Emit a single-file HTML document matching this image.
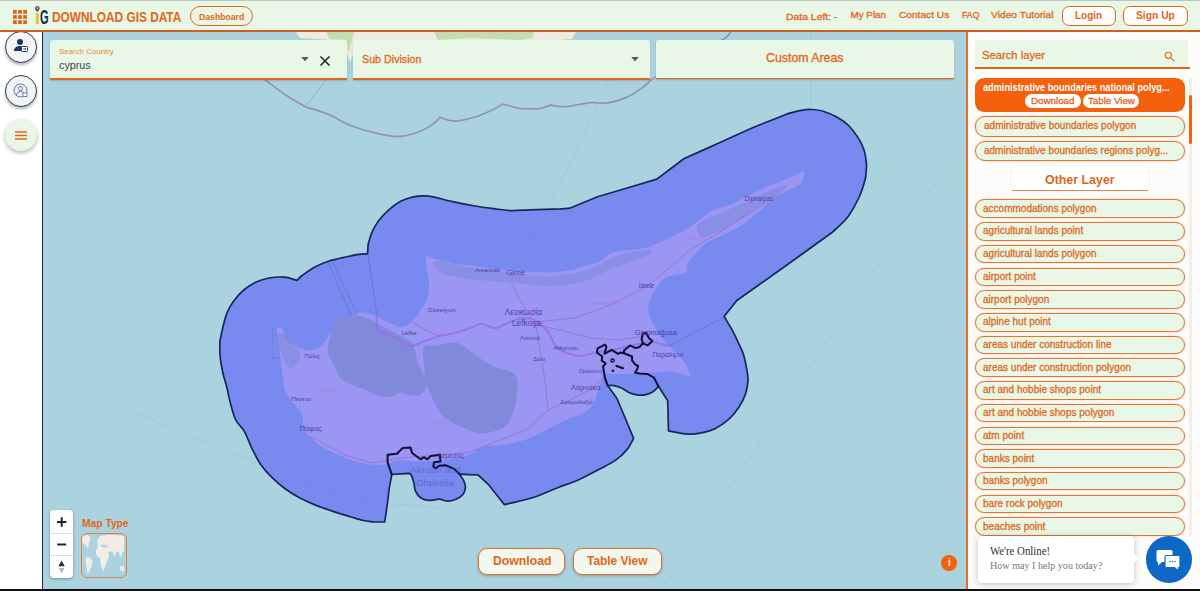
<!DOCTYPE html>
<html lang="en">
<head>
<meta charset="utf-8">
<title>Download GIS Data - Cyprus</title>
<style>
*{box-sizing:border-box;margin:0;padding:0}
html,body{width:1200px;height:591px;overflow:hidden;background:#fff;font-family:"Liberation Sans",sans-serif}
.abs{position:absolute}
.t{position:absolute;white-space:nowrap;transform-origin:0 50%;z-index:20}
.m{-webkit-text-stroke:.3px currentColor}
#hdr{position:absolute;left:0;top:0;width:1200px;height:32px;background:#e9f7e6;border-top:1px solid #bcc6bc;border-bottom:2px solid #cf5f1c;z-index:5}
#side{position:absolute;left:0;top:32px;width:43px;height:559px;background:#fff;border-right:1px solid #1f2a44;z-index:4}
#map{position:absolute;left:43px;top:32px;width:923px;height:559px;background:#aad3df;overflow:hidden}
#panel{position:absolute;left:965.500px;top:32px;width:234.500px;height:559px;background:#fdfcfb;border-left:2px solid #e0702c;z-index:4}
#bottomline{position:absolute;left:0;top:589px;width:1200px;height:2px;background:#111;z-index:30}
.pill{position:absolute;border:1px solid #e2661a}
.box{position:absolute;background:#e9f7e6;border-bottom:2px solid #e2661a;box-shadow:0 1px 2px rgba(0,0,0,.18);border-radius:3px 3px 0 0;z-index:6}
.li{position:absolute;left:975.400px;width:209.400px;height:18.500px;border:1px solid #e2762f;border-radius:10px;background:#e9f7e6;box-shadow:0 0 2px rgba(226,102,26,.45);z-index:6}
.circ{position:absolute;left:4.500px;width:32px;height:32px;border-radius:50%;background:#f3f4f6;border:1px solid #3a3f4a;box-shadow:0 2px 3px rgba(0,0,0,.3)}
.btn{position:absolute;border:1.700px solid #e2702a;border-radius:9px;background:#f3f8ee;box-shadow:0 1px 3px rgba(0,0,0,.25);z-index:6}
</style>
</head>
<body>
<div id="hdr"></div>
<svg class="abs" style="left:13px;top:9.500px;z-index:7" width="14" height="14" viewBox="0 0 14 14"><g fill="#e2661a"><rect x="0" y="0" width="3.800" height="3.800"/><rect x="5.100" y="0" width="3.800" height="3.800"/><rect x="10.200" y="0" width="3.800" height="3.800"/><rect x="0" y="5.100" width="3.800" height="3.800"/><rect x="5.100" y="5.100" width="3.800" height="3.800"/><rect x="10.200" y="5.100" width="3.800" height="3.800"/><rect x="0" y="10.200" width="3.800" height="3.800"/><rect x="5.100" y="10.200" width="3.800" height="3.800"/><rect x="10.200" y="10.200" width="3.800" height="3.800"/></g></svg>
<span class="t" style="left:34.600px;top:6.0px;font-size:21px;line-height:21px;color:#e6c62c;font-weight:bold">ı</span>
<svg class="abs" style="left:35.200px;top:5.900px;z-index:21" width="4.600" height="6" viewBox="0 0 46 60"><path d="M23 0C10 0 0 10 0 22c0 14 23 38 23 38s23-24 23-38C46 10 36 0 23 0z" fill="#46555a"/><circle cx="23" cy="21" r="8" fill="#e9f7e6"/></svg>
<span class="t" style="left:40.300px;top:6.5px;font-size:20.500px;line-height:20.500px;color:#0d2f52;font-weight:bold;transform:scaleX(.54)">G</span>
<div class="pill" style="left:190px;top:5.500px;width:63px;height:20px;border-radius:10px;z-index:7"></div>
<div class="pill" style="left:1062.300px;top:5.500px;width:53.500px;height:20px;border-radius:7px;background:#fff;z-index:7"></div>
<div class="pill" style="left:1123.200px;top:5.500px;width:64.600px;height:20px;border-radius:7px;background:#fff;z-index:7"></div>
<div id="side">
  <div class="circ" style="top:-1px"></div>
  <svg class="abs" style="left:12.500px;top:6px" width="16" height="16" viewBox="0 0 16 16"><circle cx="7" cy="4" r="3" fill="#1d3566"/><path d="M1 13c0-3.500 2.500-5 6-5 1 0 2 .2 2.800.5V13z" fill="#1d3566"/><rect x="8.500" y="8.500" width="6" height="5" rx=".8" fill="#fff" stroke="#1d3566" stroke-width="1"/><path d="M10 11h3M12 10l1 1-1 1" stroke="#1d3566" stroke-width=".8" fill="none"/></svg>
  <div class="circ" style="top:42.500px"></div>
  <svg class="abs" style="left:12.500px;top:50.500px" width="16" height="16" viewBox="0 0 16 16"><circle cx="7.500" cy="7.500" r="6.500" fill="none" stroke="#4a6a9c" stroke-width=".9"/><circle cx="7.500" cy="5.500" r="2" fill="none" stroke="#4a6a9c" stroke-width=".9"/><path d="M3.500 12c.5-2.500 2-3.500 4-3.500s3.500 1 4 3.500" fill="none" stroke="#4a6a9c" stroke-width=".9"/><rect x="10" y="10" width="4" height="3.500" fill="#fff" stroke="#4a6a9c" stroke-width=".8"/></svg>
  <div class="abs" style="left:4.500px;top:87px;width:32px;height:32px;border-radius:50%;background:#e9f7e6;box-shadow:0 2px 4px rgba(0,0,0,.3)"></div>
  <svg class="abs" style="left:14.500px;top:98.500px" width="12" height="9" viewBox="0 0 12 9"><path d="M0 1h12M0 4.500h12M0 8h12" stroke="#e2661a" stroke-width="1.300"/></svg>
</div>
<div id="map">
<svg class="abs" style="left:0;top:0" width="923" height="559" viewBox="43 32 923 559">
<rect x="43" y="32" width="923" height="559" fill="#aad3df"/>
<path d="M296 32 L300 38 L330 40 L340 42 L346 52 L350 62 L355 50 L362 41 L380 40 L430 41 L470 40 L520 41 L560 40 L572 39 L576 32 Z" fill="#f0ebe0"/>
<path d="M326 32 L330 39 L346 40 L349 52 L352 40 L354 32 Z M434 32 L438 40 L470 38 L520 40 L532 38 L534 32 Z" fill="#c4dcb4"/>
<path d="M264.9 79.8 C271.9 84.9 279.3 90.7 286.0 95.2 C292.7 99.7 298.8 102.9 305.2 106.7 C312.9 109.2 320.5 111.1 328.2 114.3 C335.9 117.5 343.5 122.7 351.2 125.8 C358.9 128.9 366.5 130.9 374.2 132.7 C381.9 134.5 390.2 136.6 397.2 136.6 C404.2 136.6 410.6 134.6 416.3 132.7 C422.1 130.8 427.7 127.6 431.7 125.1 C435.7 122.5 437.3 120.0 440.1 117.4 C445.0 118.7 448.4 121.4 454.7 121.2 C461.0 121.0 471.3 118.1 477.7 116.2 C484.1 114.3 488.9 111.7 493.0 109.7 C497.1 107.7 499.4 105.9 502.6 104.0 C508.3 105.5 514.1 107.1 519.8 108.6 C526.2 108.6 533.9 109.2 539.0 108.6 C544.1 108.0 546.7 106.3 550.5 105.1 C555.6 105.6 559.4 107.1 565.8 106.7 C572.2 106.3 581.8 103.5 588.8 102.8 C595.8 102.1 601.6 103.8 608.0 102.8 C614.4 101.8 621.5 99.6 627.2 97.1 C633.0 94.5 638.0 90.7 642.5 87.5 C647.0 84.3 647.8 82.2 654.0 77.9 C660.2 73.7 671.5 67.0 680.0 62.0 C688.5 57.0 697.7 51.8 705.0 48.0 C712.3 44.2 719.7 41.7 724.0 39.0 C728.3 36.3 728.7 34.3 731.0 32.0" fill="none" stroke="#9391ba" stroke-width="1.7" stroke-linejoin="round"/>
<path d="M305.2 106.7 L326 80" fill="none" stroke="#9c98c4" stroke-width=".7"/>
<path d="M608 80 L577 150 L521 259" fill="none" stroke="#8fb0cf" stroke-width=".8" stroke-dasharray="2 2" opacity=".7"/>
<path d="M950 161 L855 300 L775 420 L665 585" fill="none" stroke="#8fb0cf" stroke-width=".8" stroke-dasharray="2 2" opacity=".7"/>
<path d="M133 412 L253 462 L330 490 L392 504 L444 508" fill="none" stroke="#8fb0cf" stroke-width=".8" stroke-dasharray="2 2" opacity=".7"/>
<path d="M811 32 L811 110 L806 171" fill="none" stroke="#8fb0cf" stroke-width=".8" stroke-dasharray="2 2" opacity=".7"/>
<path d="M425.9 255.4 C429.6 256.8 432.2 258.2 436.9 259.6 C441.5 261.0 448.1 262.8 453.8 263.8 C459.5 264.8 465.2 264.8 470.8 265.5 C476.4 266.2 482.1 267.4 487.7 268.1 C493.3 268.8 499.0 269.2 504.6 269.8 C510.2 270.4 515.9 271.1 521.5 271.5 C527.1 271.9 532.8 272.2 538.4 272.3 C544.0 272.4 549.8 272.7 555.4 272.3 C561.0 271.9 566.7 271.1 572.3 269.8 C577.9 268.5 584.6 266.1 589.2 264.7 C593.8 263.3 596.0 263.2 600.0 261.2 C604.0 259.1 605.9 254.6 613.2 252.4 C620.5 250.2 635.2 250.2 644.0 248.0 C652.8 245.8 658.7 242.5 666.0 239.2 C673.3 235.9 681.4 232.2 688.0 228.2 C694.6 224.2 701.2 218.1 705.6 215.0 C710.0 211.9 710.0 211.3 714.4 209.5 C718.8 207.7 726.1 206.4 732.0 204.0 C737.9 201.6 743.7 198.1 749.6 195.2 C755.5 192.3 761.0 189.2 767.2 186.4 C773.4 183.7 781.0 181.3 787.0 178.7 C793.0 176.1 798.0 173.6 803.5 171.0 C803.9 171.7 804.2 172.5 804.6 173.2 C803.1 176.9 803.1 181.3 800.2 184.2 C797.3 187.1 791.8 188.2 787.0 190.8 C782.2 193.4 775.6 196.7 771.6 199.6 C767.6 202.5 765.7 205.8 762.8 208.4 C759.9 211.0 757.7 212.1 754.0 215.0 C750.3 217.9 745.9 222.7 740.8 226.0 C735.7 229.3 729.1 231.9 723.2 234.8 C717.3 237.7 710.4 240.3 705.6 243.6 C700.8 246.9 697.5 251.3 694.6 254.6 C691.7 257.9 689.5 260.5 688.0 263.4 C686.5 266.3 688.4 270.2 685.8 272.2 C683.2 274.2 676.3 274.4 672.6 275.5 C668.9 276.6 666.7 276.4 663.8 278.8 C660.9 281.2 657.5 285.8 655.0 290.0 C652.5 294.2 649.8 299.6 648.8 303.8 C647.8 308.0 648.3 311.7 649.0 315.0 C649.7 318.3 651.0 319.8 653.0 323.5 C655.0 327.2 658.4 333.3 661.1 337.0 C663.8 340.7 666.3 342.9 669.2 345.9 C672.1 348.8 676.0 351.7 678.7 354.7 C681.4 357.7 683.7 361.0 685.5 364.1 C687.3 367.2 688.6 371.5 689.5 373.6 C690.4 375.8 690.4 375.9 690.9 377.0 C687.7 376.1 684.8 375.2 681.4 374.3 C678.0 373.4 674.7 372.0 670.6 371.6 C666.5 371.2 660.6 372.0 657.0 372.2 C653.4 372.4 652.0 372.7 648.9 372.9 C645.8 373.1 642.8 373.4 638.1 373.6 C633.4 373.8 626.1 373.9 620.6 374.0 C615.1 374.1 608.1 373.5 605.0 374.5 C601.9 375.5 602.9 377.4 601.8 380.0 C600.7 382.6 600.0 385.7 598.4 390.0 C596.8 394.3 594.8 402.0 592.0 406.0 C589.2 410.0 586.1 411.4 581.5 413.8 C576.9 416.2 570.2 418.1 564.6 420.6 C559.0 423.1 553.3 426.2 547.7 429.0 C542.1 431.8 536.4 435.2 530.8 437.5 C525.1 439.8 519.4 441.7 513.8 443.0 C508.2 444.3 502.4 444.8 497.0 445.5 C491.6 446.2 486.0 445.5 481.5 447.0 C477.0 448.5 475.6 452.4 470.0 454.5 C464.4 456.6 454.2 458.4 447.7 459.5 C441.1 460.6 436.3 460.9 430.7 461.2 C425.1 461.5 419.4 461.3 413.8 461.2 C408.2 461.1 401.4 459.9 396.9 460.5 C392.4 461.1 391.0 463.9 386.8 464.6 C382.6 465.3 376.9 465.2 371.5 464.6 C366.1 464.0 360.2 462.9 354.6 461.2 C349.0 459.5 343.3 457.0 337.7 454.5 C332.1 452.0 325.6 449.1 320.8 446.0 C316.0 442.9 311.7 438.9 308.9 435.8 C306.1 432.7 304.9 431.1 303.8 427.4 C302.7 423.7 304.1 418.0 302.1 413.8 C300.1 409.6 294.8 405.9 292.0 402.0 C289.2 398.1 286.7 394.6 285.2 390.2 C283.7 385.8 283.5 380.1 282.8 375.7 C282.1 371.3 281.6 368.6 281.0 363.8 C280.4 359.0 279.9 351.2 279.4 347.0 C278.8 342.8 278.2 341.7 277.7 338.5 C277.2 335.3 276.9 331.5 276.5 328.0 C278.3 327.9 280.2 327.9 282.0 327.8 C283.1 331.2 284.1 335.5 285.4 338.0 C286.6 340.5 287.1 341.2 289.5 343.0 C291.9 344.8 296.0 347.4 299.7 348.6 C303.4 349.8 307.8 350.9 311.5 350.3 C315.2 349.7 318.9 347.6 321.7 345.2 C324.5 342.8 326.3 339.0 328.4 336.0 C330.4 333.0 331.9 329.8 334.0 327.0 C336.1 324.2 338.3 321.1 341.2 319.4 C344.1 317.7 348.0 317.9 351.4 316.8 C354.8 315.7 357.3 312.6 361.5 312.6 C365.7 312.6 372.3 315.1 376.8 316.8 C381.3 318.5 384.4 321.1 388.6 322.8 C392.8 324.5 398.2 327.3 402.1 327.0 C406.1 326.7 408.9 324.2 412.3 321.0 C415.7 317.8 419.9 311.4 422.4 307.5 C424.9 303.6 426.4 301.3 427.5 297.4 C428.6 293.4 429.3 288.9 429.2 283.8 C429.1 278.7 427.2 271.7 426.7 267.0 C426.1 262.3 426.2 259.3 425.9 255.4 Z" fill="#f2efe9"/>
<path d="M339.0 319.3 C342.7 317.9 351.5 315.7 357.3 316.2 C363.1 316.7 369.2 320.3 373.6 322.3 C378.0 324.3 379.3 326.0 383.7 328.4 C388.1 330.8 395.3 333.8 400.0 336.5 C404.7 339.2 409.4 340.6 412.1 344.7 C414.8 348.8 414.7 356.3 416.2 360.9 C417.7 365.4 419.4 368.3 421.0 372.0 C422.6 375.7 426.2 379.3 426.0 383.0 C425.8 386.7 423.0 392.2 420.0 394.0 C417.0 395.8 411.3 394.4 408.0 394.0 C404.7 393.6 402.7 391.2 400.0 391.4 C397.3 391.6 395.2 394.7 391.8 395.4 C388.4 396.1 383.7 396.4 379.6 395.4 C375.6 394.4 371.6 391.0 367.5 389.3 C363.4 387.6 359.7 387.3 355.3 385.3 C350.9 383.3 344.4 380.6 341.0 377.2 C337.6 373.8 337.0 369.1 335.0 365.0 C333.0 360.9 329.6 357.6 328.9 352.8 C328.2 348.1 330.0 341.2 331.0 336.5 C332.0 331.8 333.7 327.3 335.0 324.4 C336.3 321.5 335.3 320.7 339.0 319.3 Z" fill="#bcd4b4" stroke="#bcd4b4" stroke-width="2" stroke-linejoin="round" opacity="1"/>
<path d="M424.3 348.7 C426.0 343.6 431.1 347.5 436.5 346.7 C441.9 345.9 450.2 342.1 457.0 344.0 C463.8 345.9 471.3 353.8 477.5 357.8 C483.7 361.8 488.8 365.5 494.4 368.0 C500.0 370.5 507.6 370.8 511.3 373.0 C515.0 375.2 515.8 376.7 516.4 381.5 C517.0 386.3 516.1 395.1 514.7 401.8 C513.3 408.6 510.8 417.5 508.0 422.0 C505.2 426.5 502.3 427.3 497.8 429.0 C493.3 430.7 487.1 432.9 480.9 432.3 C474.7 431.7 466.8 428.3 460.6 425.5 C454.4 422.7 448.2 419.9 443.7 415.4 C439.2 410.9 436.1 403.5 433.5 398.4 C430.9 393.3 429.2 388.6 428.0 385.0 C426.8 381.4 426.9 383.1 426.3 377.0 C425.7 370.9 422.6 353.8 424.3 348.7 Z" fill="#bcd4b4" stroke="#bcd4b4" stroke-width="2" stroke-linejoin="round" opacity="1"/>
<path d="M277.5 336.0 C278.2 334.5 281.2 333.8 283.0 335.0 C284.8 336.2 286.0 340.7 288.0 343.0 C290.0 345.3 293.0 347.0 295.0 349.0 C297.0 351.0 299.7 352.8 300.0 355.0 C300.3 357.2 298.5 359.8 297.0 362.0 C295.5 364.2 292.8 368.0 291.0 368.0 C289.2 368.0 287.5 364.7 286.0 362.0 C284.5 359.3 283.2 355.0 282.0 352.0 C280.8 349.0 279.8 346.7 279.0 344.0 C278.2 341.3 276.8 337.5 277.5 336.0 Z" fill="#bcd4b4" stroke="#bcd4b4" stroke-width="2" stroke-linejoin="round" opacity="0.6"/>
<path d="M437.0 262.0 C441.0 261.8 451.2 265.5 460.0 267.0 C468.8 268.5 480.0 269.7 490.0 271.0 C500.0 272.3 509.2 274.0 520.0 275.0 C530.8 276.0 543.3 277.8 555.0 277.0 C566.7 276.2 579.2 273.5 590.0 270.0 C600.8 266.5 610.0 259.2 620.0 256.0 C630.0 252.8 646.7 250.7 650.0 251.0 C653.3 251.3 646.7 255.2 640.0 258.0 C633.3 260.8 619.2 264.3 610.0 268.0 C600.8 271.7 595.0 277.2 585.0 280.0 C575.0 282.8 561.7 284.7 550.0 285.0 C538.3 285.3 526.7 283.0 515.0 282.0 C503.3 281.0 490.8 280.2 480.0 279.0 C469.2 277.8 457.3 276.8 450.0 275.0 C442.7 273.2 438.2 270.2 436.0 268.0 C433.8 265.8 433.0 262.2 437.0 262.0 Z" fill="#bcd4b4" stroke="#bcd4b4" stroke-width="2" stroke-linejoin="round" opacity="0.6"/>
<path d="M700.0 224.0 C704.7 219.7 720.0 214.7 730.0 210.0 C740.0 205.3 750.8 200.0 760.0 196.0 C769.2 192.0 783.3 185.3 785.0 186.0 C786.7 186.7 776.7 195.0 770.0 200.0 C763.3 205.0 753.3 211.0 745.0 216.0 C736.7 221.0 727.2 226.7 720.0 230.0 C712.8 233.3 705.3 237.0 702.0 236.0 C698.7 235.0 695.3 228.3 700.0 224.0 Z" fill="#bcd4b4" stroke="#bcd4b4" stroke-width="2" stroke-linejoin="round" opacity="0.6"/>
<path d="M308.9 435.8 L325.0 444.0 L345.0 455.0 L372.0 463.0 L400.0 458.0 L440.0 455.0 L470.0 452.0 L500.0 440.0 L530.0 428.0 L548.0 410.0 L545.0 380.0 L540.0 350.0 L536.0 325.0" fill="none" stroke="#f0a8a0" stroke-width="1" stroke-linejoin="round"/>
<path d="M536.0 325.0 L560.0 330.0 L590.0 338.0 L620.0 340.0 L650.0 335.0" fill="none" stroke="#f0a8a0" stroke-width="1" stroke-linejoin="round"/>
<path d="M536.0 325.0 L520.0 300.0 L512.0 283.0 L512.0 272.0" fill="none" stroke="#f0a8a0" stroke-width="1" stroke-linejoin="round"/>
<path d="M548.0 410.0 L570.0 400.0 L590.0 390.0 L603.0 378.0" fill="none" stroke="#f0a8a0" stroke-width="1" stroke-linejoin="round"/>
<path d="M536.0 322.0 L575.0 318.0 L610.0 305.0 L640.0 290.0 L655.0 280.0" fill="none" stroke="#f0a8a0" stroke-width="1" stroke-linejoin="round"/>
<path d="M655.0 280.0 L690.0 250.0 L720.0 232.0 L750.0 212.0" fill="none" stroke="#f0a8a0" stroke-width="1" stroke-linejoin="round"/>
<path d="M440.0 336.0 L425.0 330.0 L412.0 322.0" fill="none" stroke="#f0a8a0" stroke-width="1" stroke-linejoin="round"/>
<path d="M376.8 316.8 C377.2 321.2 375.5 326.8 378.0 330.0 C380.5 333.2 387.7 333.8 392.0 336.0 C396.3 338.2 400.7 341.3 404.0 343.0 C407.3 344.7 408.5 346.3 412.0 346.0 C415.5 345.7 420.3 342.7 425.0 341.0 C429.7 339.3 435.0 337.3 440.0 336.0 C445.0 334.7 450.0 334.3 455.0 333.0 C460.0 331.7 465.5 329.5 470.0 328.0 C474.5 326.5 477.8 324.0 482.0 324.0 C486.2 324.0 490.3 328.3 495.0 328.0 C499.7 327.7 505.0 323.7 510.0 322.0 C515.0 320.3 520.3 318.0 525.0 318.0 C529.7 318.0 534.2 319.7 538.0 322.0 C541.8 324.3 545.2 328.2 548.0 332.0 C550.8 335.8 552.2 341.7 555.0 345.0 C557.8 348.3 560.8 350.2 565.0 352.0 C569.2 353.8 574.7 356.0 580.0 356.0 C585.3 356.0 591.7 353.0 597.0 352.0 C602.3 351.0 606.5 351.0 612.0 350.0 C617.5 349.0 623.7 347.3 630.0 346.0 C636.3 344.7 643.5 342.0 650.0 342.0 C656.5 342.0 662.7 344.7 669.0 346.0" fill="none" stroke="#e79ad0" stroke-width="2.2" stroke-linejoin="round" opacity=".8"/>
<path d="M220.2 340.0 C220.7 337.4 221.6 332.5 222.7 328.0 C223.8 323.5 225.2 317.3 227.0 312.8 C228.8 308.3 230.9 304.8 233.7 301.0 C236.5 297.2 240.1 293.1 243.8 290.0 C247.5 286.9 251.5 284.3 255.7 282.3 C259.9 280.3 264.4 278.9 269.2 278.0 C274.0 277.1 279.9 276.8 284.5 277.2 C289.1 277.6 292.9 279.3 297.1 280.3 C298.8 278.7 299.2 277.7 302.2 275.5 C305.2 273.3 310.5 269.4 314.9 267.0 C319.3 264.6 323.3 262.9 328.4 261.2 C333.5 259.5 340.3 258.1 345.4 257.0 C350.5 255.9 355.2 254.9 358.9 254.4 C362.6 253.9 364.7 254.0 367.6 253.8 C367.8 250.7 367.9 247.6 368.1 244.5 C369.3 240.5 370.1 236.5 371.8 232.6 C373.6 228.7 375.8 224.6 378.6 220.8 C381.4 217.0 385.1 213.1 388.8 209.8 C392.5 206.6 396.7 203.4 400.6 201.3 C404.6 199.2 408.6 198.0 412.5 197.1 C416.4 196.2 420.6 195.9 424.3 195.9 C428.0 195.9 430.0 196.2 434.5 197.1 C439.0 198.0 444.6 199.8 451.4 201.3 C458.2 202.8 467.8 204.7 475.1 206.0 C482.4 207.3 489.3 208.1 495.4 208.9 C501.4 209.7 505.8 210.4 511.4 210.6 C517.0 210.8 523.3 210.1 529.2 209.8 C539.5 209.5 549.7 209.2 560.0 208.9 C563.2 208.7 566.4 208.4 569.6 208.2 C578.9 204.4 588.2 200.6 597.5 196.8 C617.3 190.9 637.0 185.0 656.8 179.1 C665.8 172.3 674.8 165.6 683.8 158.8 C695.9 153.4 707.9 147.9 720.0 142.5 C731.3 137.4 742.5 132.3 753.8 127.2 C765.1 122.7 776.4 118.2 787.7 113.7 C792.2 112.6 797.2 111.0 801.2 110.3 C805.2 109.6 807.7 109.3 811.4 109.5 C815.1 109.7 819.0 109.9 823.2 111.2 C827.4 112.5 832.6 114.7 836.8 117.1 C841.0 119.5 845.1 122.1 848.6 125.5 C852.1 128.9 855.4 133.5 857.9 137.4 C860.4 141.3 862.4 145.0 863.8 149.2 C865.2 153.4 866.0 158.6 866.4 162.8 C866.8 167.0 866.1 171.7 865.9 174.6 C865.7 177.5 865.9 176.8 865.0 180.0 C864.1 183.2 862.5 189.0 860.7 193.5 C858.9 198.0 856.5 202.7 854.0 207.1 C851.5 211.5 849.2 215.6 845.5 219.8 C841.8 224.0 836.5 228.3 832.0 232.5 C821.8 239.8 811.7 247.2 801.5 254.5 C794.3 259.7 787.1 264.8 779.9 270.0 C765.5 280.2 751.2 290.3 736.8 300.5 C732.6 305.8 728.3 311.2 724.1 316.5 C726.6 320.7 729.3 324.8 731.7 329.2 C734.1 333.6 736.4 338.6 738.4 342.8 C740.4 347.0 742.1 350.1 743.5 354.6 C744.9 359.1 746.1 365.7 746.9 370.0 C747.6 374.3 748.2 376.5 748.0 380.5 C747.8 384.5 747.0 389.5 745.5 394.0 C744.0 398.5 741.5 403.3 738.7 407.5 C735.9 411.7 732.6 415.9 728.6 419.4 C724.6 422.9 719.5 426.4 715.0 428.7 C710.5 430.9 706.0 432.0 701.5 432.9 C697.0 433.8 693.5 434.4 688.0 434.1 C682.5 433.8 675.0 432.0 668.5 430.9 C668.2 420.9 668.0 410.8 667.7 400.8 C664.6 396.0 661.6 391.1 658.5 386.3 C656.7 388.1 655.2 390.3 653.0 391.7 C650.8 393.1 647.7 394.3 645.0 394.8 C642.3 395.3 639.3 395.1 636.8 394.8 C634.3 394.5 632.5 394.1 630.0 393.0 C627.5 391.9 624.7 389.5 622.0 388.3 C619.3 387.1 616.2 386.1 613.8 385.6 C611.4 385.2 609.7 385.6 607.7 385.6 C610.8 389.9 613.9 394.3 617.0 398.6 C619.8 405.4 622.7 412.1 625.5 418.9 C628.2 425.4 630.9 431.9 633.6 438.4 C631.5 442.1 630.2 445.7 627.2 449.4 C624.2 453.1 620.2 457.0 615.4 460.4 C610.6 463.8 604.6 466.4 598.4 469.7 C592.2 473.0 584.9 477.0 578.1 480.0 C571.3 483.0 565.3 484.7 557.7 487.7 C550.1 490.7 541.2 495.0 532.3 497.8 C523.4 500.6 513.7 502.3 504.4 504.6 C499.0 497.8 493.7 491.1 488.3 484.3 C484.9 481.2 481.5 478.1 478.1 475.0 C471.9 474.7 465.7 474.4 459.5 474.1 C460.9 476.4 462.8 478.6 463.8 480.9 C464.8 483.2 465.5 485.4 465.4 487.7 C465.2 490.0 464.4 492.6 462.9 494.5 C461.3 496.4 458.6 498.1 456.1 499.2 C453.6 500.3 450.5 501.2 447.7 501.2 C444.9 501.2 442.3 499.3 439.2 499.2 C436.1 499.1 432.2 500.6 429.1 500.4 C426.0 500.2 422.9 499.4 420.6 497.8 C418.3 496.2 416.6 493.6 415.5 491.1 C414.4 488.6 414.5 485.3 413.8 482.6 C413.1 479.9 412.1 476.6 411.3 475.0 C410.5 473.4 409.6 473.9 408.8 473.3 C403.1 473.7 397.5 474.1 391.8 474.5 C391.0 478.9 390.1 483.3 389.3 487.7 C388.7 493.0 388.0 498.4 387.4 503.7 C386.5 509.8 385.6 515.9 384.7 522.0 C381.3 522.0 377.8 522.0 374.4 522.0 C370.7 521.5 367.3 521.4 363.3 520.5 C359.3 519.6 354.9 518.1 350.2 516.7 C345.5 515.3 340.9 514.0 335.3 512.1 C329.7 510.2 322.6 507.9 316.7 505.6 C310.8 503.3 305.3 500.9 300.0 498.1 C294.7 495.3 289.8 492.2 285.1 488.8 C280.5 485.4 276.1 481.7 272.1 477.7 C268.1 473.7 264.1 469.3 260.9 464.7 C257.6 460.1 255.4 455.4 252.6 449.8 C249.8 444.2 247.0 436.2 244.2 431.2 C241.4 426.2 238.1 424.7 235.8 420.0 C233.5 415.3 231.8 408.2 230.3 402.8 C228.8 397.4 228.2 392.6 226.9 387.5 C225.6 382.4 223.8 377.4 222.7 372.3 C221.6 367.2 220.7 361.8 220.2 357.0 C219.7 352.2 219.8 346.3 219.8 343.5 C219.8 340.7 219.7 342.6 220.2 340.0 Z" fill="#4a45ff" fill-opacity=".52" stroke="#17265a" stroke-width="1.7" stroke-linejoin="round"/>
<path d="M391.8 474.5 L387.6 462.3 L387.6 454.7 L396.9 453.8 L402.8 447.9 L410.5 447.6 L412.1 453.0 L420.6 459.3 L424.0 457.2 L427.4 459.3 L430.8 455.9 L440.0 454.7 L440.4 461.5 L434.1 462.3 L433.3 466.5 L435.8 468.2 L439.2 465.7 L446.0 465.3 L454.5 469.1 L459.5 474.1" fill="none" stroke="#0d1030" stroke-width="2" stroke-linejoin="round" stroke-linecap="round"/>
<path d="M607.7 385.6 L605.0 378.2 L603.0 366.7 L605.7 363.3 L601.7 360.6 L602.3 356.5 L596.9 352.5 L597.6 348.4 L605.0 344.6 L606.4 347.0 L604.4 353.8 L611.8 349.8 L617.9 353.8 L620.6 352.5 L624.0 353.2 L624.0 350.4 L630.0 345.4 L635.5 348.1 L639.5 347.0 L642.9 343.3 L641.6 338.9 L642.9 333.5 L646.3 332.9 L649.0 338.3 L652.4 341.0 L647.7 345.4 L642.9 343.3" fill="none" stroke="#0d1030" stroke-width="2" stroke-linejoin="round" stroke-linecap="round"/>
<path d="M624.0 353.2 L632.1 356.5 L632.1 360.6 L635.5 364.7 L638.2 366.0 L636.8 370.0 L634.8 372.5 L639.5 373.4 L647.7 374.1 L653.8 377.5 L658.5 386.3" fill="none" stroke="#0d1030" stroke-width="2" stroke-linejoin="round" stroke-linecap="round"/>
<circle cx="612.5" cy="360.6" r="1.6" fill="none" stroke="#0d1030" stroke-width="1.3"/>
<path d="M616.5 366 L623 368.2" stroke="#0d1030" stroke-width="2.2" stroke-linecap="round"/>
<circle cx="612.9" cy="370.7" r="1.3" fill="#0d1030"/>
<path d="M328 262 L351 316" fill="none" stroke="#6a6fd0" stroke-width=".8"/>
<path d="M332 261 L357 314" fill="none" stroke="#6a6fd0" stroke-width=".8"/>
<path d="M368 254 L377 316" fill="none" stroke="#6a6fd0" stroke-width=".8"/>
<path d="M669 346 L724 317" fill="none" stroke="#6a6fd0" stroke-width=".8"/>
<path d="M277 328 L273 329 L272 358 L281 358" fill="none" stroke="#6a6fd0" stroke-width=".8" opacity=".5"/>
<text x="504.6" y="315.0" font-size="9.5" textLength="37.4" lengthAdjust="spacingAndGlyphs" fill="#4d3fa8" fill-opacity="1" font-family="Liberation Sans,sans-serif" >Λευκωσία</text>
<text x="512.0" y="325.5" font-size="9.5" textLength="29.0" lengthAdjust="spacingAndGlyphs" fill="#4d3fa8" fill-opacity="1" font-family="Liberation Sans,sans-serif" >Lefkoşa</text>
<text x="506.3" y="274.8" font-size="7" textLength="18.6" lengthAdjust="spacingAndGlyphs" fill="#4d3fa8" fill-opacity="1" font-family="Liberation Sans,sans-serif" >Girne</text>
<text x="475.0" y="271.5" font-size="5.5" textLength="24.9" lengthAdjust="spacingAndGlyphs" fill="#4d3fa8" fill-opacity="1" font-family="Liberation Sans,sans-serif" >Arsancak</text>
<text x="427.6" y="311.5" font-size="6" textLength="27.9" lengthAdjust="spacingAndGlyphs" fill="#4d3fa8" fill-opacity="1" font-family="Liberation Sans,sans-serif" >Güzelyurt</text>
<text x="401.4" y="334.5" font-size="6" textLength="15.2" lengthAdjust="spacingAndGlyphs" fill="#4d3fa8" fill-opacity="1" font-family="Liberation Sans,sans-serif" >Lefke</text>
<text x="304.2" y="358.0" font-size="6" textLength="15.8" lengthAdjust="spacingAndGlyphs" fill="#4d3fa8" fill-opacity="1" font-family="Liberation Sans,sans-serif" >Πόλις</text>
<text x="290.7" y="400.5" font-size="6" textLength="20.3" lengthAdjust="spacingAndGlyphs" fill="#4d3fa8" fill-opacity="1" font-family="Liberation Sans,sans-serif" >Πέγεια</text>
<text x="299.8" y="431.0" font-size="7.5" textLength="22.0" lengthAdjust="spacingAndGlyphs" fill="#4d3fa8" fill-opacity="1" font-family="Liberation Sans,sans-serif" >Πάφος</text>
<text x="571.0" y="390.0" font-size="7.5" textLength="29.6" lengthAdjust="spacingAndGlyphs" fill="#4d3fa8" fill-opacity="1" font-family="Liberation Sans,sans-serif" >Λάρνακα</text>
<text x="578.6" y="372.5" font-size="6" textLength="23.0" lengthAdjust="spacingAndGlyphs" fill="#4d3fa8" fill-opacity="1" font-family="Liberation Sans,sans-serif" >Ορόκλινη</text>
<text x="560.3" y="403.5" font-size="6" textLength="32.7" lengthAdjust="spacingAndGlyphs" fill="#4d3fa8" fill-opacity="1" font-family="Liberation Sans,sans-serif" >Δρομολαξιά</text>
<text x="533.3" y="361.0" font-size="5.5" textLength="11.9" lengthAdjust="spacingAndGlyphs" fill="#4d3fa8" fill-opacity="1" font-family="Liberation Sans,sans-serif" >Δάλι</text>
<text x="519.8" y="339.5" font-size="5.5" textLength="20.2" lengthAdjust="spacingAndGlyphs" fill="#4d3fa8" fill-opacity="1" font-family="Liberation Sans,sans-serif" >Λατσιά</text>
<text x="553.6" y="350.0" font-size="5.5" textLength="24.7" lengthAdjust="spacingAndGlyphs" fill="#4d3fa8" fill-opacity="1" font-family="Liberation Sans,sans-serif" >Αθηένου</text>
<text x="634.8" y="334.5" font-size="8" textLength="42.0" lengthAdjust="spacingAndGlyphs" fill="#4d3fa8" fill-opacity="1" font-family="Liberation Sans,sans-serif" >Gazimağusa</text>
<text x="652.4" y="356.5" font-size="6.5" textLength="30.5" lengthAdjust="spacingAndGlyphs" fill="#4d3fa8" fill-opacity="1" font-family="Liberation Sans,sans-serif" >Παραλίμνι</text>
<text x="638.8" y="287.5" font-size="6.5" textLength="15.2" lengthAdjust="spacingAndGlyphs" fill="#4d3fa8" fill-opacity="1" font-family="Liberation Sans,sans-serif" >İskele</text>
<text x="744.6" y="200.5" font-size="6.5" textLength="28.8" lengthAdjust="spacingAndGlyphs" fill="#4d3fa8" fill-opacity="1" font-family="Liberation Sans,sans-serif" >Dipkarpaz</text>
<text x="437.5" y="457.5" font-size="7" textLength="26.3" lengthAdjust="spacingAndGlyphs" fill="#4d3fa8" fill-opacity="1" font-family="Liberation Sans,sans-serif" >Λεμεσός</text>
<text x="410.0" y="473.0" font-size="8.5" textLength="51.0" lengthAdjust="spacingAndGlyphs" fill="#5a4ab0" fill-opacity="0.55" font-family="Liberation Sans,sans-serif" >Akrotiri and</text>
<text x="416.4" y="486.0" font-size="8.5" textLength="37.6" lengthAdjust="spacingAndGlyphs" fill="#5a4ab0" fill-opacity="0.55" font-family="Liberation Sans,sans-serif" >Dhekelia</text>
<text x="318.0" y="392.0" font-size="6" textLength="21.0" lengthAdjust="spacingAndGlyphs" fill="#b070d8" fill-opacity="0.7" font-family="Liberation Sans,sans-serif" >Πάφος</text>
<text x="430.0" y="423.5" font-size="6" textLength="20.0" lengthAdjust="spacingAndGlyphs" fill="#b070d8" fill-opacity="0.6" font-family="Liberation Sans,sans-serif" >Λεμεσός</text>
<text x="587.0" y="305.0" font-size="6" textLength="35.0" lengthAdjust="spacingAndGlyphs" fill="#b070d8" fill-opacity="0.6" font-family="Liberation Sans,sans-serif" >Gazimağusa</text>
<text x="688.0" y="239.5" font-size="6" textLength="17.0" lengthAdjust="spacingAndGlyphs" fill="#b070d8" fill-opacity="0.7" font-family="Liberation Sans,sans-serif" >İskele</text>
</svg>
</div>
<div class="box" style="left:49.700px;top:40px;width:297.800px;height:40px"></div>
<div class="box" style="left:353px;top:40px;width:297.300px;height:40px"></div>
<div class="box" style="left:655.800px;top:40px;width:298px;height:38.800px;border-bottom-width:1.500px"></div>
<svg class="abs" style="left:300.600px;top:57.300px;z-index:7" width="8" height="4.500" viewBox="0 0 10 6"><path d="M0 0h10L5 5.500z" fill="#555"/></svg>
<svg class="abs" style="left:319px;top:54.500px;z-index:7" width="12" height="12" viewBox="0 0 12 12"><path d="M1.500 1.500l9 9M10.500 1.500l-9 9" stroke="#222" stroke-width="1.500" fill="none"/></svg>
<svg class="abs" style="left:630.500px;top:57.300px;z-index:7" width="8" height="4.500" viewBox="0 0 10 6"><path d="M0 0h10L5 5.500z" fill="#555"/></svg>
<div class="abs" style="left:49.700px;top:509.700px;width:23.300px;height:68.300px;background:#fff;border-radius:4px;box-shadow:0 1px 3px rgba(0,0,0,.35);z-index:6">
<div class="abs" style="left:0;top:23.300px;width:23.300px;height:1px;background:#ddd"></div>
<div class="abs" style="left:0;top:45.500px;width:23.300px;height:1px;background:#ddd"></div>
<svg class="abs" style="left:0;top:0" width="23.300" height="68.300" viewBox="0 0 23.300 68.300"><path d="M7 12h9.400M11.700 7.300v9.400" stroke="#222" stroke-width="2" fill="none"/><path d="M7.200 34.500h9" stroke="#222" stroke-width="2" fill="none"/><path d="M11.600 50.500l3.200 5.800h-6.400z" fill="#333"/><path d="M11.600 63.500l3-5.500h-6z" fill="#bbb"/></svg>
</div>
<div class="abs" style="left:81px;top:532.500px;width:46px;height:45.600px;border:1.800px solid #e07e3c;border-radius:6px;background:#aad3df;overflow:hidden;z-index:6">
<svg width="42.400" height="42" viewBox="0 0 42 42"><g fill="#f4ede6"><path d="M0 2l5-1 3 2 0 4-2 3 1 3-2 1-1-2-2-2-2-1z"/><path d="M3.500 23l4 .5 3 3.500-1 5-2.500 5-1.500 3.500-1-6-1-5z"/><path d="M15 6l3-4 7-1 9 0 8 1v14l-2 3-1 5-1.500-3-1.500-4-2 1-1.500 5-2-5-2.500-1-2 2 1 3-2 5-2.500 7-1.500 3-2.500-6-.5-7-3.500-2-1-5 2-4z"/><path d="M38 32l4 .5v5l-4-1z"/></g><path d="M18 11l4-.5 4 1 -1 2.500-5-.5z" fill="#aad3df" opacity=".8"/></svg>
</div>
<div class="btn" style="left:478.300px;top:547.800px;width:86.600px;height:26.800px"></div>
<div class="btn" style="left:572.800px;top:547.800px;width:88.900px;height:26.800px"></div>
<div class="abs" style="left:941.300px;top:555px;width:16px;height:16px;border-radius:50%;background:#f4600c;color:#fff;font-size:10px;font-weight:bold;line-height:16px;text-align:center;z-index:6">i</div>
<div id="panel"><div class="abs" style="left:221.500px;top:46px;width:3.300px;height:458px;background:#f0efee;border-radius:2px"></div></div>
<div class="abs" style="left:975.400px;top:40.200px;width:213px;height:27px;background:#e9f7e6;border-radius:3px 3px 0 0;z-index:6"></div>
<div class="abs" style="left:975.400px;top:67.100px;width:214.500px;height:2.300px;background:#e2661a;z-index:6"></div>
<svg class="abs" style="left:1162.500px;top:49.500px;z-index:7" width="13.500" height="13.500" viewBox="0 0 24 24"><path fill="#e2661a" d="M15.500 14h-.79l-.28-.27A6.470 6.470 0 0 0 16 9.500 6.500 6.500 0 1 0 9.500 16c1.610 0 3.090-.59 4.230-1.570l.27.280v.79l5 4.990L20.490 19zm-6 0C7.010 14 5 11.990 5 9.500S7.010 5 9.500 5 14 7.010 14 9.500 11.990 14 9.500 14"/></svg>
<div class="abs" style="left:975.400px;top:78.400px;width:209.400px;height:33.600px;background:#f4600c;border-radius:9px;z-index:6"></div>
<div class="abs" style="left:1024.900px;top:94.400px;width:55.800px;height:13.600px;border-radius:7px;background:#fff;z-index:7"></div>
<div class="abs" style="left:1082.600px;top:94.400px;width:56.600px;height:13.600px;border-radius:7px;background:#fff;z-index:7"></div>
<div class="li" style="top:116.400px;height:20.500px"></div>
<div class="li" style="top:140.800px;height:20px"></div>
<div class="abs" style="left:1189.100px;top:94.600px;width:3.200px;height:49.200px;background:#f4600c;border-radius:2px;z-index:7"></div>
<div class="abs" style="left:1011.800px;top:165.600px;width:136.500px;height:25.500px;background:#fff;border-bottom:1.500px solid #dd8a50;box-shadow:0 0 3px rgba(0,0,0,.06);z-index:6"></div>
<div class="li" style="top:199.4px"></div>
<div class="li" style="top:222.1px"></div>
<div class="li" style="top:244.8px"></div>
<div class="li" style="top:267.5px"></div>
<div class="li" style="top:290.2px"></div>
<div class="li" style="top:313.0px"></div>
<div class="li" style="top:335.7px"></div>
<div class="li" style="top:358.4px"></div>
<div class="li" style="top:381.1px"></div>
<div class="li" style="top:403.8px"></div>
<div class="li" style="top:426.5px"></div>
<div class="li" style="top:449.2px"></div>
<div class="li" style="top:471.9px"></div>
<div class="li" style="top:494.6px"></div>
<div class="li" style="top:517.3px"></div>
<div class="abs" style="left:977.600px;top:536px;width:156px;height:47px;background:#fff;border-radius:4px;box-shadow:0 1px 6px rgba(0,0,0,.25);z-index:10"></div>
<div class="abs" style="left:1130px;top:555px;width:7px;height:7px;background:#fff;transform:rotate(45deg);z-index:10"></div>
<div class="abs" style="left:1145.600px;top:536px;width:46.800px;height:46.800px;border-radius:50%;background:#0e69c6;z-index:10"></div>
<svg class="abs" style="left:1156px;top:549px;z-index:11" width="26" height="24" viewBox="0 0 26 24"><path d="M2 1h13a1.500 1.500 0 0 1 1.500 1.500v9A1.500 1.500 0 0 1 15 13H6l-4 3.500V13a1.500 1.500 0 0 1-1.500-1.500v-9A1.500 1.500 0 0 1 2 1z" fill="#fff"/><path d="M10.500 6.500h12A1.500 1.500 0 0 1 24 8v9a1.500 1.500 0 0 1-1.500 1.500v3.500L18.500 18.500h-8A1.500 1.500 0 0 1 9 17V8a1.500 1.500 0 0 1 1.500-1.500z" fill="#fff" stroke="#0e69c6" stroke-width="1.200"/><circle cx="14" cy="12.500" r=".8" fill="#0e69c6"/><circle cx="16.500" cy="12.500" r=".8" fill="#0e69c6"/><circle cx="19" cy="12.500" r=".8" fill="#0e69c6"/></svg>
<span class="t" style="left:52.1px;top:9.3px;font-size:15.3px;line-height:15.3px;color:#e2661a;font-weight:bold;transform:scaleX(0.775)">DOWNLOAD GIS DATA</span>
<span class="t" style="left:198.9px;top:11.5px;font-size:9.5px;line-height:9.5px;color:#e2661a;font-weight:bold;transform:scaleX(0.911)">Dashboard</span>
<span class="t m" style="left:786.4px;top:11.5px;font-size:9.8px;line-height:9.8px;color:#e2661a;transform:scaleX(1.061)">Data Left: -</span>
<span class="t m" style="left:850.6px;top:10.4px;font-size:9.8px;line-height:9.8px;color:#e2661a;transform:scaleX(1.000)">My Plan</span>
<span class="t m" style="left:898.8px;top:10.4px;font-size:9.8px;line-height:9.8px;color:#e2661a;transform:scaleX(1.036)">Contact Us</span>
<span class="t m" style="left:961.5px;top:10.4px;font-size:9.8px;line-height:9.8px;color:#e2661a;transform:scaleX(0.888)">FAQ</span>
<span class="t m" style="left:991.2px;top:10.4px;font-size:9.8px;line-height:9.8px;color:#e2661a;transform:scaleX(1.048)">Video Tutorial</span>
<span class="t" style="left:1075.3px;top:10.3px;font-size:11.4px;line-height:11.4px;color:#e2661a;font-weight:bold;transform:scaleX(0.874)">Login</span>
<span class="t" style="left:1136.2px;top:10.3px;font-size:11.4px;line-height:11.4px;color:#e2661a;font-weight:bold;transform:scaleX(0.904)">Sign Up</span>
<span class="t" style="left:58.5px;top:48.0px;font-size:8px;line-height:8px;color:#e8853f;transform:scaleX(0.986)">Search Country</span>
<span class="t" style="left:58.8px;top:59.1px;font-size:11.7px;line-height:11.7px;color:#444;transform:scaleX(0.921)">cyprus</span>
<span class="t m" style="left:361.7px;top:54.0px;font-size:11.4px;line-height:11.4px;color:#e2661a;transform:scaleX(0.940)">Sub Division</span>
<span class="t m" style="left:765.5px;top:52.0px;font-size:12.6px;line-height:12.6px;color:#e2661a;transform:scaleX(0.980)">Custom Areas</span>
<span class="t" style="left:81.7px;top:518.5px;font-size:10.3px;line-height:10.3px;color:#e2661a;font-weight:bold;transform:scaleX(0.997)">Map Type</span>
<span class="t" style="left:492.6px;top:554.6px;font-size:12.8px;line-height:12.8px;color:#e2661a;font-weight:bold;transform:scaleX(0.957)">Download</span>
<span class="t" style="left:587.4px;top:554.6px;font-size:12.8px;line-height:12.8px;color:#e2661a;font-weight:bold;transform:scaleX(0.931)">Table View</span>
<span class="t m" style="left:982.0px;top:48.9px;font-size:11.6px;line-height:11.6px;color:#e2661a;transform:scaleX(0.968)">Search layer</span>
<span class="t" style="left:982.6px;top:81.8px;font-size:11px;line-height:11px;color:#fff;font-weight:bold;transform:scaleX(0.834)">administrative boundaries national polyg...</span>
<span class="t m" style="left:1031.3px;top:95.9px;font-size:9.8px;line-height:9.8px;color:#e2661a;transform:scaleX(0.998)">Download</span>
<span class="t m" style="left:1087.9px;top:95.9px;font-size:9.8px;line-height:9.8px;color:#e2661a;transform:scaleX(0.992)">Table View</span>
<span class="t m" style="left:983.5px;top:120.2px;font-size:11px;line-height:11px;color:#e2661a;transform:scaleX(0.912)">administrative boundaries polygon</span>
<span class="t m" style="left:983.5px;top:144.6px;font-size:11px;line-height:11px;color:#e2661a;transform:scaleX(0.908)">administrative boundaries regions polyg...</span>
<span class="t" style="left:1045.0px;top:173.5px;font-size:12.5px;line-height:12.5px;color:#e2661a;font-weight:bold;transform:scaleX(0.992)">Other Layer</span>
<span class="t m" style="left:982.6px;top:202.7px;font-size:11px;line-height:11px;color:#e2661a;transform:scaleX(0.910)">accommodations polygon</span>
<span class="t m" style="left:982.6px;top:225.4px;font-size:11px;line-height:11px;color:#e2661a;transform:scaleX(0.910)">agricultural lands point</span>
<span class="t m" style="left:982.6px;top:248.1px;font-size:11px;line-height:11px;color:#e2661a;transform:scaleX(0.910)">agricultural lands polygon</span>
<span class="t m" style="left:982.6px;top:270.8px;font-size:11px;line-height:11px;color:#e2661a;transform:scaleX(0.910)">airport point</span>
<span class="t m" style="left:982.6px;top:293.5px;font-size:11px;line-height:11px;color:#e2661a;transform:scaleX(0.910)">airport polygon</span>
<span class="t m" style="left:982.6px;top:316.2px;font-size:11px;line-height:11px;color:#e2661a;transform:scaleX(0.910)">alpine hut point</span>
<span class="t m" style="left:982.6px;top:338.9px;font-size:11px;line-height:11px;color:#e2661a;transform:scaleX(0.910)">areas under construction line</span>
<span class="t m" style="left:982.6px;top:361.7px;font-size:11px;line-height:11px;color:#e2661a;transform:scaleX(0.910)">areas under construction polygon</span>
<span class="t m" style="left:982.6px;top:384.4px;font-size:11px;line-height:11px;color:#e2661a;transform:scaleX(0.910)">art and hobbie shops point</span>
<span class="t m" style="left:982.6px;top:407.1px;font-size:11px;line-height:11px;color:#e2661a;transform:scaleX(0.910)">art and hobbie shops polygon</span>
<span class="t m" style="left:982.6px;top:429.8px;font-size:11px;line-height:11px;color:#e2661a;transform:scaleX(0.910)">atm point</span>
<span class="t m" style="left:982.6px;top:452.5px;font-size:11px;line-height:11px;color:#e2661a;transform:scaleX(0.910)">banks point</span>
<span class="t m" style="left:982.6px;top:475.2px;font-size:11px;line-height:11px;color:#e2661a;transform:scaleX(0.910)">banks polygon</span>
<span class="t m" style="left:982.6px;top:497.9px;font-size:11px;line-height:11px;color:#e2661a;transform:scaleX(0.910)">bare rock polygon</span>
<span class="t m" style="left:982.6px;top:520.6px;font-size:11px;line-height:11px;color:#e2661a;transform:scaleX(0.910)">beaches point</span>
<span class="t" style="left:989.6px;top:544.8px;font-size:12px;line-height:12px;color:#333;font-family:'Liberation Serif',serif;transform:scaleX(0.898)">We&#39;re Online!</span>
<span class="t" style="left:989.6px;top:560.7px;font-size:10.5px;line-height:10.5px;color:#777;font-family:'Liberation Serif',serif;transform:scaleX(0.961)">How may I help you today?</span>
<div id="bottomline"></div>
</body>
</html>
